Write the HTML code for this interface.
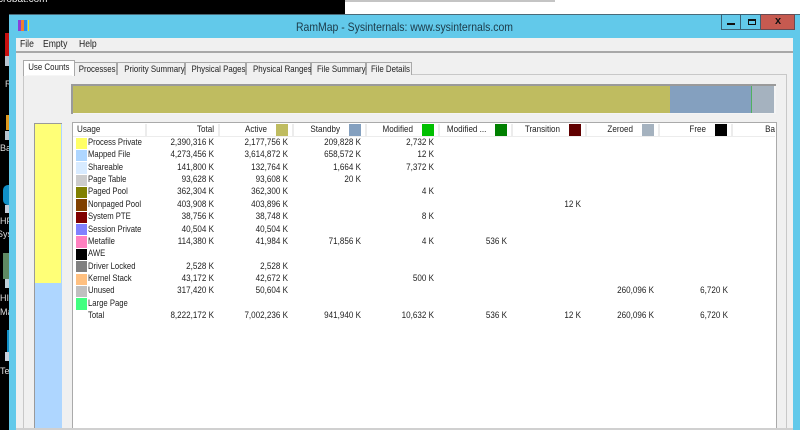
<!DOCTYPE html>
<html><head><meta charset="utf-8"><style>
html,body{margin:0;padding:0;background:#000}
#p{position:relative;width:800px;height:430px;overflow:hidden;background:#000;font-family:"Liberation Sans",sans-serif;font-size:9.5px;color:#222;filter:blur(.3px)}
#p div{position:absolute}
.d{color:#ddd;white-space:nowrap;font-size:9px}
.t{top:62px;height:13px;background:#f0f0f0;border:1px solid #a9a9a9;border-bottom:none;box-sizing:border-box;text-align:center;line-height:13px;white-space:nowrap;font-size:9.5px}
.t u{display:inline-block;text-decoration:none;transform:scaleX(.83);transform-origin:50% 50%}
.h{top:124px;height:12px;line-height:12px;white-space:nowrap;text-align:right;transform:scaleX(.85);transform-origin:100% 50%}
.v{top:124px;width:2px;height:12px;background:#ececec}
.s{top:124px;width:12px;height:12px}
.r{left:73px;width:702px;height:12.36px;line-height:12.36px;white-space:nowrap}
.r b{position:absolute;left:3px;top:.5px;width:11px;height:11.4px}
.r i{position:absolute;left:15px;font-style:normal;transform:scaleX(.81);transform-origin:0 50%}
.r span{position:absolute;text-align:right;width:72px;transform:scaleX(.85);transform-origin:100% 50%}
.a{left:69px}.b{left:143px}.c{left:216px}.e{left:289px}.f{left:362px}.g{left:436px}.j{left:509px}.k{left:583px}
.m{top:38px;height:13px;line-height:13px;font-size:10px;white-space:nowrap;color:#222;transform:scaleX(.86);transform-origin:0 50%}
</style></head><body><div id="p">
<div style="left:345px;top:0;width:455px;height:14px;background:#fff"></div>
<div style="left:345px;top:0;width:210px;height:2px;background:#c4c4c4"></div>
<div class="d" style="left:-2px;top:-6px;color:#eee;font-size:10px">crobat.com</div>
<div style="left:5px;top:33px;width:4px;height:23px;background:#c81010"></div>
<div style="left:5px;top:56px;width:4px;height:10px;background:#b8c4d0"></div>
<div class="d" style="left:5px;top:79px">R</div>
<div style="left:6px;top:115px;width:3px;height:15px;background:#e09a20"></div>
<div style="left:5px;top:131px;width:4px;height:9px;background:#b8c4d0"></div>
<div class="d" style="left:0;top:143px">Bac</div>
<div style="left:3px;top:185px;width:6px;height:20px;background:#1090c8;border-radius:5px 0 0 5px"></div>
<div style="left:5px;top:205px;width:4px;height:8px;background:#c4ccd8"></div>
<div class="d" style="left:0;top:216px">HP</div>
<div class="d" style="left:-3px;top:229px">Sys</div>
<div style="left:3px;top:253px;width:6px;height:26px;background:#5f8a64"></div>
<div style="left:5px;top:279px;width:4px;height:9px;background:#c0d0d8"></div>
<div class="d" style="left:0;top:293px">HI</div>
<div class="d" style="left:0;top:307px">Ma</div>
<div style="left:7px;top:330px;width:2px;height:22px;background:#1090c8"></div>
<div style="left:5px;top:352px;width:4px;height:9px;background:#c8d0dc"></div>
<div class="d" style="left:0;top:366px">Tea</div>

<div style="left:9px;top:14px;width:791px;height:416px;background:#62c9ea;border-top:1px solid #4a6a78;box-sizing:border-box"></div>
<div style="left:18px;top:20px;width:3px;height:11px;background:#8a3fd8"></div>
<div style="left:21px;top:20px;width:3px;height:11px;background:#f08030"></div>
<div style="left:24px;top:20px;width:3px;height:11px;background:#2a8ae8"></div>
<div style="left:28px;top:20px;width:1px;height:11px;background:#e8e020"></div>
<div style="left:0;top:20px;width:809px;text-align:center;font-size:12px;line-height:14px;color:#1c3a48;transform:scaleX(.87);transform-origin:404.5px 50%">RamMap - Sysinternals: www.sysinternals.com</div>

<div style="left:721px;top:14px;width:20px;height:16px;border:1px solid #3a6074;box-sizing:border-box;background:#62c9ea"></div>
<div style="left:727px;top:23px;width:8px;height:2px;background:#111"></div>
<div style="left:741px;top:14px;width:20px;height:16px;border:1px solid #3a6074;border-left:none;box-sizing:border-box"></div>
<div style="left:748px;top:19px;width:8px;height:6px;border:2px solid #111;border-width:2px 1.5px 1.5px;box-sizing:border-box"></div>
<div style="left:761px;top:14px;width:34px;height:16px;background:#c65a50;border:1px solid #6a4a50;border-left:none;box-sizing:border-box"></div>
<div style="left:761px;top:14px;width:34px;height:16px;text-align:center;line-height:15px;font-size:11px;font-weight:bold;color:#111">x</div>

<div style="left:16px;top:38px;width:777px;height:392px;background:#f0f0f0"></div>
<div style="left:16px;top:51px;width:777px;height:2px;background:#a8a8a8"></div>
<div class="m" style="left:20px">File</div>
<div class="m" style="left:43px">Empty</div>
<div class="m" style="left:79px">Help</div>

<div style="left:23px;top:74px;width:764px;height:355px;border:1px solid #c8c8c8;box-sizing:border-box;background:#f0f0f0"></div>
<div class="t" style="left:74px;width:43px"><u>Processes</u></div>
<div class="t" style="left:117px;width:68px"><u>Priority Summary</u></div>
<div class="t" style="left:185px;width:61px"><u>Physical Pages</u></div>
<div class="t" style="left:246px;width:65px"><u>Physical Ranges</u></div>
<div class="t" style="left:311px;width:55px"><u>File Summary</u></div>
<div class="t" style="left:366px;width:46px"><u>File Details</u></div>
<div class="t" style="left:23px;top:60px;width:52px;height:16px;background:#fff;line-height:14px;border-color:#a9a9a9"><u>Use Counts</u></div>
<div style="left:26px;top:75px;width:46px;height:1px;background:#f6f6f6"></div>

<div style="left:71px;top:84px;width:705px;height:30px;background:#f4f4f4;border-top:2px solid #9a9a9a;border-left:2px solid #9a9a9a;box-sizing:border-box"></div>
<div style="left:73px;top:86px;width:597px;height:27px;background:#bfbc60"></div>
<div style="left:670px;top:86px;width:81px;height:27px;background:#84a0bf"></div>
<div style="left:751px;top:86px;width:1px;height:27px;background:#50b060"></div>
<div style="left:752px;top:86px;width:22px;height:27px;background:#a5b2bf"></div>

<div style="left:34px;top:123px;width:28px;height:306px;border-left:1px solid #9a9a9a;border-top:1px solid #9a9a9a;box-sizing:border-box;background:#aed6ff"></div>
<div style="left:35px;top:124px;width:26px;height:159px;background:#ffff77"></div>

<div style="left:72px;top:122px;width:705px;height:307px;background:#fff;border:1px solid #aaa;border-bottom:none;box-sizing:border-box"></div>
<div style="left:73px;top:136px;width:702px;height:1px;background:#ececec"></div>
<div class="h" style="left:77px;transform-origin:0 50%">Usage</div>
<div class="v" style="left:145px"></div>
<div class="h" style="left:146px;width:68px">Total</div>
<div class="v" style="left:218px"></div>
<div class="h" style="left:220px;width:47px">Active</div><div class="s" style="left:276px;background:#bfbc60"></div>
<div class="v" style="left:292px"></div>
<div class="h" style="left:294px;width:46px">Standby</div><div class="s" style="left:349px;background:#84a0bf"></div>
<div class="v" style="left:365px"></div>
<div class="h" style="left:367px;width:46px">Modified</div><div class="s" style="left:422px;background:#00c000"></div>
<div class="v" style="left:438px"></div>
<div class="h" style="left:440px;width:46px">Modified ...</div><div class="s" style="left:495px;background:#008000"></div>
<div class="v" style="left:511px"></div>
<div class="h" style="left:513px;width:47px">Transition</div><div class="s" style="left:569px;background:#600000"></div>
<div class="v" style="left:585px"></div>
<div class="h" style="left:587px;width:46px">Zeroed</div><div class="s" style="left:642px;background:#a5b2bf"></div>
<div class="v" style="left:658px"></div>
<div class="h" style="left:660px;width:46px">Free</div><div class="s" style="left:715px;background:#000"></div>
<div class="v" style="left:731px"></div>
<div class="h" style="left:733px;width:42px">Ba</div>

<div class="r" style="top:137px"><b style="background:#ffff66"></b><i>Process Private</i><span class="a">2,390,316 K</span><span class="b">2,177,756 K</span><span class="c">209,828 K</span><span class="e">2,732 K</span></div>
<div class="r" style="top:149.4px"><b style="background:#aed6ff"></b><i>Mapped File</i><span class="a">4,273,456 K</span><span class="b">3,614,872 K</span><span class="c">658,572 K</span><span class="e">12 K</span></div>
<div class="r" style="top:161.7px"><b style="background:#d8ebff"></b><i>Shareable</i><span class="a">141,800 K</span><span class="b">132,764 K</span><span class="c">1,664 K</span><span class="e">7,372 K</span></div>
<div class="r" style="top:174.1px"><b style="background:#cccccc"></b><i>Page Table</i><span class="a">93,628 K</span><span class="b">93,608 K</span><span class="c">20 K</span></div>
<div class="r" style="top:186.4px"><b style="background:#808000"></b><i>Paged Pool</i><span class="a">362,304 K</span><span class="b">362,300 K</span><span class="e">4 K</span></div>
<div class="r" style="top:198.8px"><b style="background:#804000"></b><i>Nonpaged Pool</i><span class="a">403,908 K</span><span class="b">403,896 K</span><span class="g">12 K</span></div>
<div class="r" style="top:211.2px"><b style="background:#800000"></b><i>System PTE</i><span class="a">38,756 K</span><span class="b">38,748 K</span><span class="e">8 K</span></div>
<div class="r" style="top:223.5px"><b style="background:#8080ff"></b><i>Session Private</i><span class="a">40,504 K</span><span class="b">40,504 K</span></div>
<div class="r" style="top:235.9px"><b style="background:#ff80c0"></b><i>Metafile</i><span class="a">114,380 K</span><span class="b">41,984 K</span><span class="c">71,856 K</span><span class="e">4 K</span><span class="f">536 K</span></div>
<div class="r" style="top:248.2px"><b style="background:#000"></b><i>AWE</i></div>
<div class="r" style="top:260.6px"><b style="background:#808080"></b><i>Driver Locked</i><span class="a">2,528 K</span><span class="b">2,528 K</span></div>
<div class="r" style="top:273px"><b style="background:#ffc080"></b><i>Kernel Stack</i><span class="a">43,172 K</span><span class="b">42,672 K</span><span class="e">500 K</span></div>
<div class="r" style="top:285.3px"><b style="background:#c0c0c0"></b><i>Unused</i><span class="a">317,420 K</span><span class="b">50,604 K</span><span class="j">260,096 K</span><span class="k">6,720 K</span></div>
<div class="r" style="top:297.7px"><b style="background:#40ff80"></b><i>Large Page</i></div>
<div class="r" style="top:310px"><i>Total</i><span class="a">8,222,172 K</span><span class="b">7,002,236 K</span><span class="c">941,940 K</span><span class="e">10,632 K</span><span class="f">536 K</span><span class="g">12 K</span><span class="j">260,096 K</span><span class="k">6,720 K</span></div>
<div style="left:16px;top:428px;width:777px;height:2px;background:#d0d0d0"></div>
</div></body></html>
